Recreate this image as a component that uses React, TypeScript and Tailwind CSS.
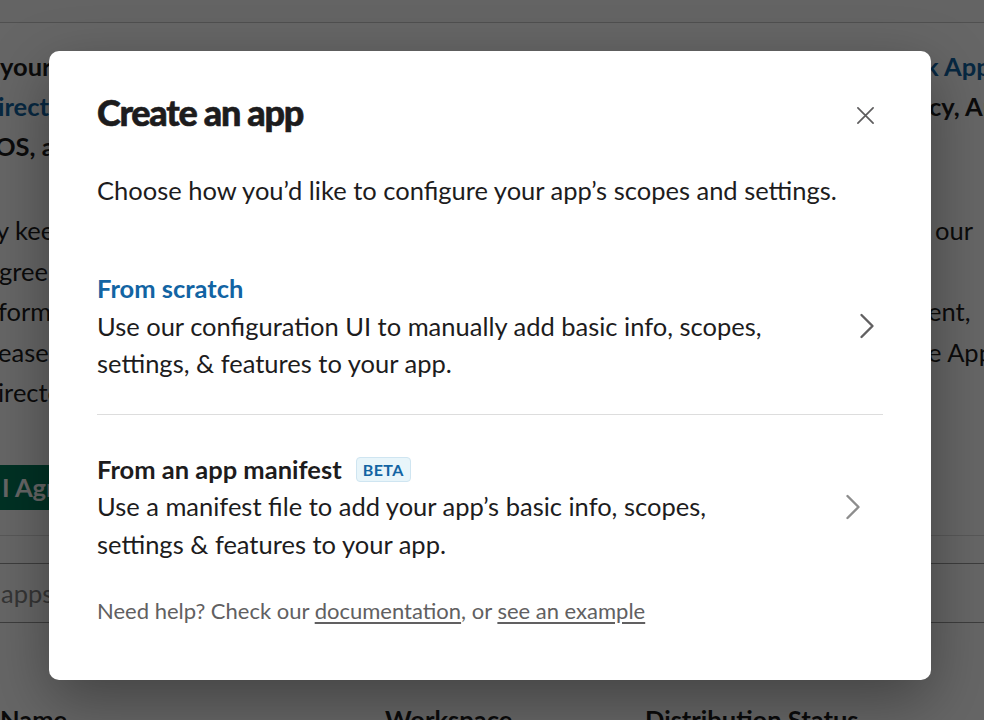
import React from 'react'

const CloseIcon = () => (
  <svg viewBox="0 0 20 20" className="h-[19px] w-[19px]" fill="none" stroke="currentColor" strokeWidth={1.8} strokeLinecap="round">
    <path d="M2 2l16 16M18 2L2 18" />
  </svg>
)

const Chevron = ({ className }: { className?: string }) => (
  <svg viewBox="0 0 16 26" className={className} fill="none" stroke="currentColor" strokeWidth={2.4} strokeLinecap="round" strokeLinejoin="round">
    <path d="M2.5 2l11 11-11 11" />
  </svg>
)

type BgLine = { text: string; cls: string }

const LEFT_TOP: BgLine[] = [
  { text: 'your app', cls: 'font-bold text-[#1d1c1d]' },
  { text: 'irectory', cls: '-ml-[2px] font-bold text-[#1264a3]' },
  { text: 'OS, and Android', cls: '-ml-[5px] font-bold text-[#1d1c1d]' },
]

const LEFT_BODY: BgLine[] = [
  { text: 'y keep', cls: '-ml-[4px]' },
  { text: 'greement', cls: '-ml-[1px]' },
  { text: 'formation', cls: '-ml-[2px]' },
  { text: 'ease', cls: '-ml-[2px]' },
  { text: 'irectory', cls: '-ml-[2px]' },
]

const RIGHT_TOP: BgLine[] = [
  { text: 'k App Directory', cls: '-ml-[6px] font-bold text-[#1264a3]' },
  { text: 'cy, And', cls: '-ml-[2px] font-bold text-[#1d1c1d]' },
  { text: '', cls: '' },
]

const RIGHT_BODY: BgLine[] = [
  { text: 'our', cls: 'ml-[4px]' },
  { text: '', cls: '' },
  { text: 'ent,', cls: '-ml-[3px]' },
  { text: 'e App', cls: '-ml-[3px]' },
  { text: '', cls: '' },
]

const Lines = ({ lines }: { lines: BgLine[] }) => (
  <>
    {lines.map((line, i) => (
      <div key={i} className={`h-[40px] whitespace-nowrap leading-[40px] ${line.cls}`}>
        {line.text}
      </div>
    ))}
  </>
)

const Page = () => (
  <div className="h-[720px] w-[984px] overflow-hidden bg-white text-[25.5px] text-[#1d1c1d]">
    <div className="h-[23px] border-b border-[#c8c8c8] bg-[#fbfbfb]" />
    <div className="grid grid-cols-[200px_731px_53px] pt-[23px]">
      <div className="flex flex-col overflow-hidden">
        <Lines lines={LEFT_TOP} />
        <div className="mt-[44px] flex flex-col gap-[0.5px]">
          <Lines lines={LEFT_BODY} />
        </div>
        <div className="-ml-[20px] mt-[53px] flex h-[45px] items-center whitespace-nowrap rounded-[4px] bg-[#007a5a] pl-[22px] font-bold text-white">
          I Agree
        </div>
      </div>
      <div />
      <div className="flex flex-col overflow-hidden">
        <Lines lines={RIGHT_TOP} />
        <div className="mt-[44px] flex flex-col gap-[0.5px]">
          <Lines lines={RIGHT_BODY} />
        </div>
      </div>
    </div>
    <div className="mt-[25px] border-t border-[#dddddd]" />
    <div className="mt-[27px] flex h-[60px] items-center border-y border-[#9a9a9a] text-[#868686]">
      <span className="ml-[1px]">apps</span>
    </div>
    <div className="mt-[76px] grid grid-cols-[385px_260px_1fr] font-bold leading-[40px]">
      <span>Name</span>
      <span>Workspace</span>
      <span>Distribution Status</span>
    </div>
  </div>
)

export default function App() {
  return (
    <div className="relative h-[720px] w-[984px] overflow-hidden font-[family-name:Lato,sans-serif]">
      <Page />
      <div className="absolute inset-0 bg-black/60" />
      <div className="absolute inset-0 pl-[49px] pt-[51px]">
        <div className="w-[882px] rounded-[10px] bg-white px-12 pb-[55px] pt-[39px] text-[#1d1c1d] shadow-[0_20px_60px_rgba(0,0,0,0.35)]">
          <div className="flex items-center justify-between">
            <h1 className="text-[36px] font-black leading-[44px] tracking-[-0.035em] [-webkit-text-stroke:0.6px_#1d1c1d]">
              Create an app
            </h1>
            <button type="button" className="mr-[8px] mt-[6px] text-[#5e5d5e]">
              <CloseIcon />
            </button>
          </div>

          <p className="mt-[38px] text-[25.5px] leading-[37px]">
            Choose how you’d like to configure your app’s scopes and settings.
          </p>

          <button type="button" className="mt-[61px] flex w-full items-center justify-between gap-6 text-left">
            <span className="flex flex-col text-[25.5px] leading-[37.5px]">
              <span className="font-bold text-[#1264a3]">From scratch</span>
              <span>Use our configuration UI to manually add basic info, scopes,</span>
              <span>settings, &amp; features to your app.</span>
            </span>
            <Chevron className="mr-[8px] h-[26px] w-[16px] shrink-0 text-[#616061]" />
          </button>

          <div className="mt-[31px] border-t border-[#dddddd]" />

          <button type="button" className="mt-[36px] flex w-full items-center justify-between gap-6 text-left">
            <span className="flex flex-col text-[25.5px] leading-[37.5px]">
              <span className="flex items-center gap-[14px]">
                <span className="font-bold">From an app manifest</span>
                <span className="rounded-[4px] border border-[#cfe5f1] bg-[#e8f5fa] px-[6px] text-[16px] font-bold leading-[23px] tracking-[0.03em] text-[#1264a3]">
                  BETA
                </span>
              </span>
              <span>Use a manifest file to add your app’s basic info, scopes,</span>
              <span>settings &amp; features to your app.</span>
            </span>
            <Chevron className="mr-[22px] h-[26px] w-[16px] shrink-0 text-[#8d8d8d]" />
          </button>

          <p className="mt-[34px] text-[22px] leading-[28px] text-[#616061]">
            Need help? Check our <a className="underline underline-offset-[3px]">documentation</a>, or{' '}
            <a className="underline underline-offset-[3px]">see an example</a>
          </p>
        </div>
      </div>
    </div>
  )
}
